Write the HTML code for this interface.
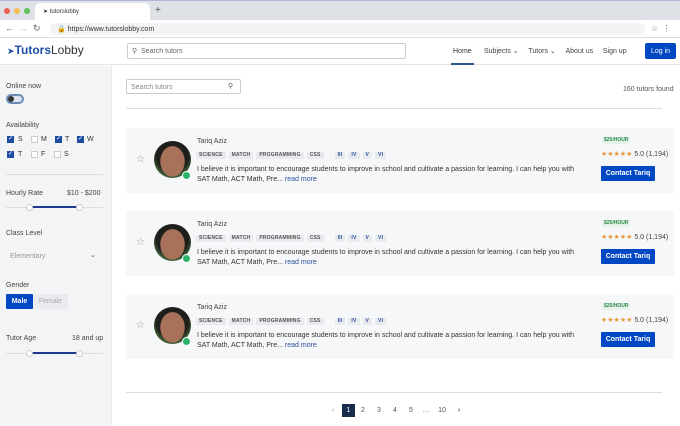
<!DOCTYPE html>
<html><head><meta charset="utf-8"><style>
*{box-sizing:border-box;margin:0;padding:0}
body{width:680px;height:426px;overflow:hidden;font-family:"Liberation Sans",sans-serif;background:#fff;position:relative;color:#333}
.a{position:absolute}
.t{font-size:7px;line-height:9px}
.btn{display:flex;align-items:center;justify-content:center}
.card{position:absolute;left:126px;width:548px;height:65px;background:#f6f7f9}
.tags{font-size:0;line-height:0;white-space:nowrap}
.tag{display:inline-block;font-size:5px;line-height:7px;font-weight:bold;color:#555;background:#e8eaee;padding:0 3px;margin-right:3px;letter-spacing:.2px}
.cb{position:absolute;width:7px;height:7px;border:1px solid #ccc;background:#fff;color:#fff;font-size:6px;line-height:5px;text-align:center}
.cb.on{background:#1d4ea3;border-color:#1d4ea3}
.pg{position:absolute;top:404px;font-size:7px;color:#555;width:12px;text-align:center;line-height:13px}
</style></head><body>
<div class="a" style="left:0;top:0;width:680px;height:20px;background:#dee1e6"></div>
<div class="a" style="left:0;top:0;width:680px;height:1px;background:#b0b4d8"></div>
<div class="a" style="left:4px;top:8px;width:6px;height:6px;border-radius:50%;background:#ed5f57"></div>
<div class="a" style="left:14px;top:8px;width:6px;height:6px;border-radius:50%;background:#f5bd4f"></div>
<div class="a" style="left:24px;top:8px;width:6px;height:6px;border-radius:50%;background:#5fc453"></div>
<div class="a" style="left:35px;top:3px;width:115px;height:18px;background:#fff;border-radius:5px 5px 0 0"></div>
<div class="a t" style="left:43px;top:8px;font-size:6px;color:#333">➤ tutorslobby</div>
<div class="a" style="left:155px;top:5px;font-size:10px;color:#555">+</div>
<div class="a" style="left:0;top:20px;width:680px;height:18px;background:#fff;border-bottom:1px solid #ddd"></div>
<div class="a" style="left:5px;top:23px;font-size:9px;color:#666">←&nbsp; <span style="color:#bbb">→</span>&nbsp; ↻</div>
<div class="a" style="left:50px;top:23px;width:595px;height:12px;background:#f1f3f4;border-radius:6px"></div>
<div class="a t" style="left:57px;top:25px;color:#333">🔒&nbsp;https://www.tutorslobby.com</div>
<div class="a" style="left:651px;top:24px;font-size:8px;color:#666">☆&nbsp;&nbsp;⋮</div>
<div class="a" style="left:0;top:38px;width:680px;height:27px;background:#fff;border-bottom:1px solid #e5e5e5"></div>
<div class="a" style="left:7px;top:43px;font-size:12px;color:#1d4ea3"><span style="font-size:9px">➤</span><b>Tutors</b><span style="color:#333">Lobby</span></div>
<div class="a" style="left:127px;top:43px;width:279px;height:16px;border:1px solid #ccc;border-radius:2px"></div>
<div class="a t" style="left:132px;top:47px;color:#666">⚲&nbsp; Search tutors</div>
<div class="a t" style="left:453px;top:47px;color:#333">Home</div>
<div class="a" style="left:451px;top:63px;width:23px;height:2px;background:#2b5a8a"></div>
<div class="a t" style="left:484px;top:47px;color:#444;white-space:nowrap">Subjects ⌄&nbsp;&nbsp;&nbsp;&nbsp;&nbsp;Tutors ⌄&nbsp;&nbsp;&nbsp;&nbsp;&nbsp;About us&nbsp;&nbsp;&nbsp;&nbsp;&nbsp;Sign up</div>
<div class="a t btn" style="left:645px;top:43px;width:31px;height:16px;background:#0047c4;color:#fff;border-radius:2px">Log in</div>
<div class="a" style="left:0;top:66px;width:112px;height:360px;background:#f3f4f6;border-right:1px solid #e8e8e8"></div>
<div class="a t" style="left:6px;top:82px;color:#444">Online now</div>
<div class="a" style="left:6px;top:94px;width:18px;height:10px;border-radius:5px;background:#dbe3ee;border:2px solid #6b8db5"></div>
<div class="a" style="left:8px;top:96px;width:6px;height:6px;border-radius:50%;background:#333"></div>
<div class="a t" style="left:6px;top:121px;color:#444">Availability</div>
<div class="cb on" style="left:7px;top:136px">✓</div><div class="a t" style="left:18px;top:135px">S</div>
<div class="cb" style="left:31px;top:136px"></div><div class="a t" style="left:41px;top:135px">M</div>
<div class="cb on" style="left:55px;top:136px">✓</div><div class="a t" style="left:65px;top:135px">T</div>
<div class="cb on" style="left:77px;top:136px">✓</div><div class="a t" style="left:87px;top:135px">W</div>
<div class="cb on" style="left:7px;top:151px">✓</div><div class="a t" style="left:18px;top:150px">T</div>
<div class="cb" style="left:31px;top:151px"></div><div class="a t" style="left:41px;top:150px">F</div>
<div class="cb" style="left:54px;top:151px"></div><div class="a t" style="left:64px;top:150px">S</div>
<div class="a" style="left:6px;top:174px;width:97px;height:1px;background:#ddd"></div>
<div class="a t" style="left:6px;top:189px;color:#444">Hourly Rate</div>
<div class="a t" style="left:67px;top:189px;color:#444">$10 - $200</div>
<div class="a" style="left:6px;top:207px;width:97px;height:1px;background:#ddd"></div>
<div class="a" style="left:30px;top:206px;width:49px;height:2px;background:#1b3a8c"></div>
<div class="a" style="left:26px;top:204px;width:7px;height:7px;border-radius:50%;background:#fff;border:1px solid #ccc"></div>
<div class="a" style="left:76px;top:204px;width:7px;height:7px;border-radius:50%;background:#fff;border:1px solid #ccc"></div>
<div class="a t" style="left:6px;top:229px;color:#444">Class Level</div>
<div class="a t" style="left:10px;top:252px;color:#999">Elementary</div>
<div class="a t" style="left:90px;top:251px;color:#555">⌄</div>
<div class="a t" style="left:6px;top:281px;color:#444">Gender</div>
<div class="a t btn" style="left:6px;top:294px;width:27px;height:15px;background:#0047c4;color:#fff;font-weight:bold;border-radius:1px">Male</div>
<div class="a t btn" style="left:33px;top:294px;width:35px;height:15px;background:#e9ebee;color:#aaa">Female</div>
<div class="a t" style="left:6px;top:334px;color:#444">Tutor Age</div>
<div class="a t" style="left:72px;top:334px;color:#444">18 and up</div>
<div class="a" style="left:6px;top:353px;width:97px;height:1px;background:#ddd"></div>
<div class="a" style="left:30px;top:352px;width:49px;height:2px;background:#1b3a8c"></div>
<div class="a" style="left:26px;top:350px;width:7px;height:7px;border-radius:50%;background:#fff;border:1px solid #ccc"></div>
<div class="a" style="left:76px;top:350px;width:7px;height:7px;border-radius:50%;background:#fff;border:1px solid #ccc"></div>
<div class="a" style="left:126px;top:79px;width:115px;height:15px;border:1px solid #ccc;border-radius:2px;background:#fff"></div>
<div class="a t" style="left:131px;top:83px;color:#888">Search tutors</div>
<div class="a t" style="left:228px;top:82px;color:#555">⚲</div>
<div class="a t" style="left:623px;top:85px;color:#555">160 tutors found</div>
<div class="a" style="left:126px;top:108px;width:536px;height:1px;background:#ddd"></div>

<div class="card" style="top:128px"></div>
<div class="card" style="top:211px"></div>
<div class="card" style="top:294px"></div>
<div id="cards"></div>
<script>
var h='';
[128,211,294].forEach(function(y){
h+='<div class="a" style="left:136px;top:'+(y+26)+'px;font-size:10px;color:#999">☆</div>'+
'<div class="a" style="left:154px;top:'+(y+13)+'px;width:37px;height:37px;border-radius:50%;background:radial-gradient(ellipse 40% 50% at 50% 55%,#a8725a 0 80%,transparent 85%),radial-gradient(circle at 50% 40%,#1e1e1a 0 55%,#3d5a35 70%)"></div>'+
'<div class="a" style="left:182px;top:'+(y+43)+'px;width:9px;height:9px;border-radius:50%;background:#2ab36b;border:1px solid #fff"></div>'+
'<div class="a t" style="left:197px;top:'+(y+9)+'px;color:#444">Tariq Aziz</div>'+
'<div class="a tags" style="left:196px;top:'+(y+24)+'px"><span class="tag">SCIENCE</span><span class="tag">MATCH</span><span class="tag">PROGRAMMING</span><span class="tag">CSS</span><span style="display:inline-block;width:8px"></span><span class="tag" style="color:#2a4f9c">III</span><span class="tag" style="color:#2a4f9c">IV</span><span class="tag" style="color:#2a4f9c">V</span><span class="tag" style="color:#2a4f9c">VI</span></div>'+
'<div class="a t" style="left:197px;top:'+(y+37)+'px;width:390px;line-height:10px;color:#333">I believe it is important to encourage students to improve in school and cultivate a passion for learning. I can help you with SAT Math, ACT Math, Pre... <span style="color:#2a4f9c">read more</span></div>'+
'<div class="a" style="left:602px;top:'+(y+9)+'px;font-size:5px;line-height:7px;font-weight:bold;color:#2a8a4a;background:#e6f2ea;padding:0 2px">$25/HOUR</div>'+
'<div class="a t" style="left:601px;top:'+(y+22)+'px;color:#444;white-space:nowrap"><span style="color:#e39a3b">★★★★★</span> 5.0 (1,194)</div>'+
'<div class="a t btn" style="left:601px;top:'+(y+38)+'px;width:54px;height:15px;background:#0047c4;color:#fff;font-weight:bold;border-radius:1px">Contact Tariq</div>';
});
document.getElementById('cards').innerHTML=h;
</script>
<div class="a" style="left:126px;top:392px;width:536px;height:1px;background:#ddd"></div>
<div class="pg" style="left:327px;color:#888">‹</div>
<div class="pg" style="left:342px;background:#1b2d4f;color:#fff;width:13px">1</div>
<div class="pg" style="left:357px">2</div>
<div class="pg" style="left:373px">3</div>
<div class="pg" style="left:389px">4</div>
<div class="pg" style="left:405px">5</div>
<div class="pg" style="left:420px">…</div>
<div class="pg" style="left:435px;width:14px">10</div>
<div class="pg" style="left:453px;font-weight:bold">›</div>
</body></html>
